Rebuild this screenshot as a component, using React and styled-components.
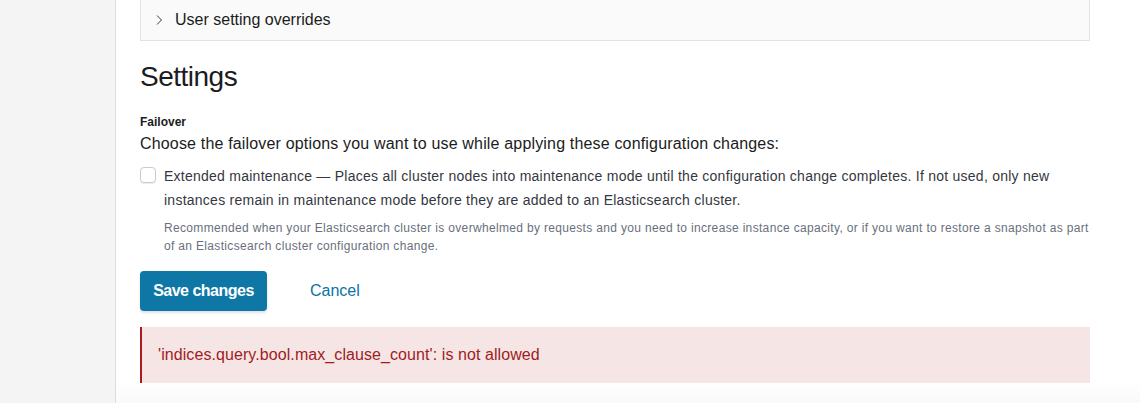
import React from "react";
import styled, { createGlobalStyle } from "styled-components";

const Global = createGlobalStyle`
  html, body { margin: 0; padding: 0; background: #ffffff; }
  body {
    width: 1140px;
    height: 403px;
    overflow: hidden;
    font-family: "Liberation Sans", Arial, Helvetica, sans-serif;
    color: #343741;
    -webkit-font-smoothing: antialiased;
  }
`;

const Shell = styled.div`
  display: flex;
  height: 403px;
`;

const Sidebar = styled.aside`
  width: 115px;
  flex: none;
  background: #f4f4f4;
  border-right: 1px solid #dcdcdc;
`;

const Main = styled.main`
  flex: 1;
  display: flex;
  flex-direction: column;
  padding: 0 50px 0 24px;
  background: #ffffff;
`;

const Panel = styled.div`
  height: 40px;
  display: flex;
  align-items: center;
  gap: 8px;
  padding-left: 10px;
  background: #fafafa;
  border: 1px solid #e2e2e2;
  border-top: none;
  font-size: 16px;
  line-height: 24px;
  color: #1a1c21;
`;

const Heading = styled.h2`
  margin: 18px 0 0;
  font-size: 28px;
  line-height: 36px;
  font-weight: 400;
  letter-spacing: -0.5px;
  color: #1a1c21;
`;

const Label = styled.div`
  margin-top: 19px;
  font-size: 12px;
  line-height: 16px;
  font-weight: 700;
  color: #1a1c21;
`;

const Intro = styled.p`
  margin: 4px 0 0;
  font-size: 16px;
  line-height: 20px;
  letter-spacing: 0.17px;
  color: #1a1c21;
`;

const CheckRow = styled.label`
  margin-top: 10px;
  display: flex;
  align-items: flex-start;
  gap: 8px;
`;

const Box = styled.span`
  flex: none;
  width: 16px;
  height: 16px;
  margin-top: 3px;
  box-sizing: border-box;
  border: 1px solid #c9ccd2;
  border-radius: 4px;
  background: #ffffff;
  box-shadow: 0 1px 1px rgba(0, 0, 0, 0.08);
`;

const CheckText = styled.div`
  font-size: 14px;
  line-height: 24px;
  letter-spacing: 0.25px;
  color: #343741;
`;

const Help = styled.p`
  margin: 7px 0 0 24px;
  font-size: 12px;
  line-height: 18px;
  letter-spacing: 0.33px;
  color: #69707d;
`;

const Actions = styled.div`
  margin-top: 16px;
  display: flex;
  align-items: center;
  gap: 31px;
`;

const Button = styled.button`
  height: 40px;
  padding: 0 12px;
  border: none;
  border-radius: 4px;
  font-family: inherit;
  font-size: 16px;
  cursor: pointer;
  ${(p) =>
    p.$primary
      ? `
    min-width: 127px;
    background: #0e77a6;
    color: #ffffff;
    font-weight: 700;
    letter-spacing: -0.5px;
    box-shadow: 0 2px 3px rgba(0, 0, 0, 0.12);
  `
      : `
    background: transparent;
    color: #0a73a3;
    font-weight: 400;
  `}
`;

const Callout = styled.div`
  margin-top: 16px;
  height: 56px;
  box-sizing: border-box;
  display: flex;
  align-items: center;
  padding-left: 16px;
  background: #f6e5e5;
  border-left: 2px solid #ad1c1c;
  font-size: 16px;
  line-height: 24px;
  letter-spacing: 0.08px;
  color: #a01c22;
`;

const Fade = styled.div`
  flex: 1;
  margin: 0 -50px 0 -24px;
  background: linear-gradient(to bottom, #ffffff, #f9f9f9);
`;

const Chevron = () => (
  <svg width="16" height="16" viewBox="0 0 16 16" fill="none">
    <path d="M6 3.5 L10.5 8 L6 12.5" stroke="#343741" strokeWidth="1" />
  </svg>
);

export default function App() {
  return (
    <>
      <Global />
      <Shell>
        <Sidebar />
        <Main>
          <Panel>
            <Chevron />
            <span>User setting overrides</span>
          </Panel>
          <Heading>Settings</Heading>
          <Label>Failover</Label>
          <Intro>
            Choose the failover options you want to use while applying these
            configuration changes:
          </Intro>
          <CheckRow>
            <Box />
            <CheckText>
              Extended maintenance — Places all cluster nodes into maintenance
              mode until the configuration change completes. If not used, only
              new instances remain in maintenance mode before they are added to
              an Elasticsearch cluster.
            </CheckText>
          </CheckRow>
          <Help>
            Recommended when your Elasticsearch cluster is overwhelmed by
            requests and you need to increase instance capacity, or if you want
            to restore a snapshot as part of an Elasticsearch cluster
            configuration change.
          </Help>
          <Actions>
            <Button $primary>Save changes</Button>
            <Button>Cancel</Button>
          </Actions>
          <Callout>'indices.query.bool.max_clause_count': is not allowed</Callout>
          <Fade />
        </Main>
      </Shell>
    </>
  );
}
